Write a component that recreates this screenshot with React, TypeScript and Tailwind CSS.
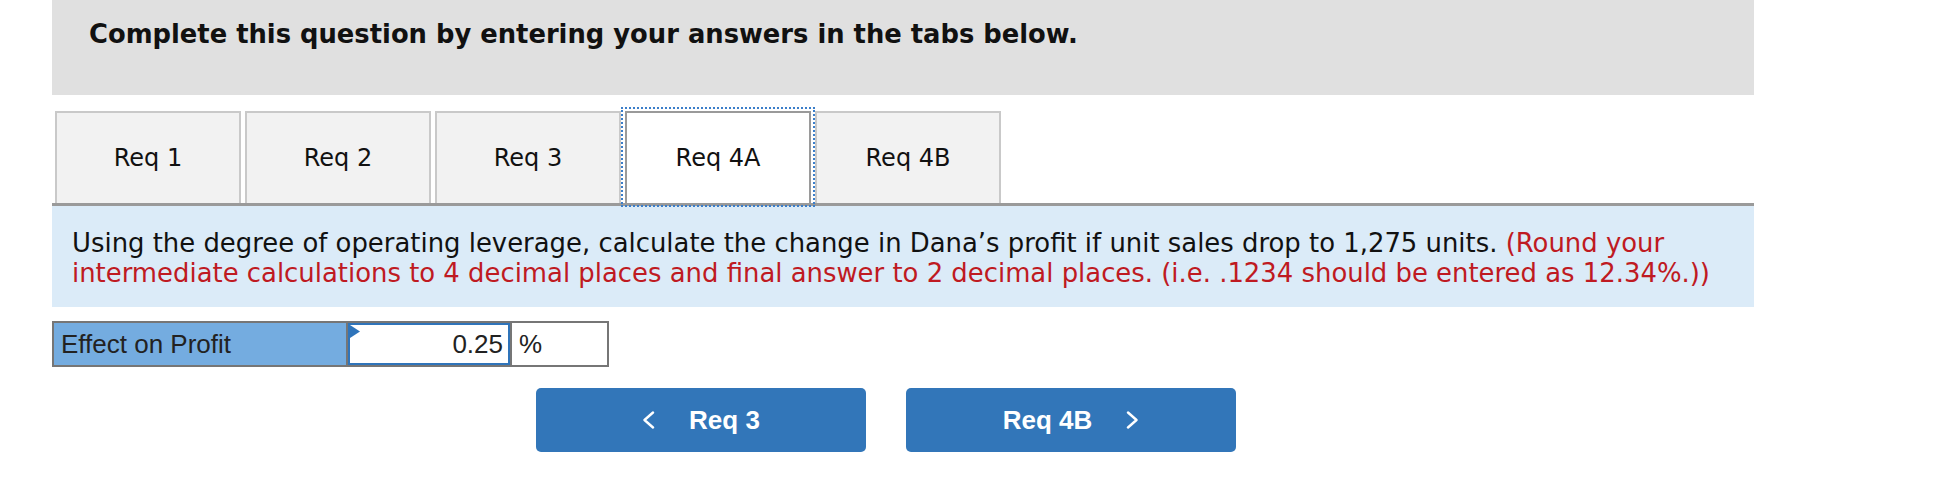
import React from "react";

const tabs = ["Req 1", "Req 2", "Req 3", "Req 4A", "Req 4B"];

function ChevronLeft() {
  return (
    <svg width="13" height="18" viewBox="0 0 13 18" fill="none">
      <polyline points="11,1.5 2.5,9 11,16.5" stroke="white" strokeWidth="2.4" strokeLinecap="round" strokeLinejoin="round" />
    </svg>
  );
}

function ChevronRight() {
  return (
    <svg width="13" height="18" viewBox="0 0 13 18" fill="none">
      <polyline points="2,1.5 10.5,9 2,16.5" stroke="white" strokeWidth="2.4" strokeLinecap="round" strokeLinejoin="round" />
    </svg>
  );
}

export default function App() {
  return (
    <div className="w-[1950px] h-[488px] bg-white overflow-hidden">
      <div className="ml-[52px] w-[1702px]">
        {/* Header */}
        <div className="h-[95px] bg-[#e0e0e0] pl-[37px] pt-[19px]">
          <div className="font-['DejaVu_Sans',sans-serif] font-bold text-[25.8px] leading-[30px] text-[#111]">
            Complete this question by entering your answers in the tabs below.
          </div>
        </div>

        {/* Tabs */}
        <div className="mt-[16px] flex gap-[4px] pl-[3px] h-[92px]">
          {tabs.map((t) => {
            const active = t === "Req 4A";
            return (
              <div
                key={t}
                className={
                  active
                    ? "w-[186px] h-[92px] flex items-center justify-center bg-white border-2 border-b-0 border-[#9a9a9a] outline-2 outline-dotted outline-offset-2 outline-[#3b7ec9] font-['DejaVu_Sans',sans-serif] text-[24px] text-[#111]"
                    : "w-[186px] h-[92px] flex items-center justify-center bg-[#f2f2f2] border-2 border-b-0 border-[#c9c9c9] font-['DejaVu_Sans',sans-serif] text-[24px] text-[#111]"
                }
              >
                {t}
              </div>
            );
          })}
        </div>
        <div className="h-[3px] bg-[#9a9a9a]" />

        {/* Question panel */}
        <div className="bg-[#dbebf8] h-[101px] pl-[20px] pt-[22px]">
          <p className="font-['DejaVu_Sans',sans-serif] text-[25.9px] leading-[30px] text-[#111] whitespace-nowrap">
            Using the degree of operating leverage, calculate the change in Dana’s profit if unit sales drop to 1,275 units.{" "}
            <span className="text-[#bf1a22]">(Round your</span>
            <br />
            <span className="text-[#bf1a22]">
              intermediate calculations to 4 decimal places and final answer to 2 decimal places. (i.e. .1234 should be entered as 12.34%.))
            </span>
          </p>
        </div>

        {/* Answer row */}
        <div className="mt-[14px] w-[557px] h-[46px] border-2 border-[#767676] flex font-['Liberation_Sans',Arial,sans-serif] text-[26px] text-[#222]">
          <div className="w-[294px] bg-[#74ace0] border-r-2 border-[#767676] flex items-center pl-[7px]">
            Effect on Profit
          </div>
          <div className="relative w-[162px] border-2 border-[#2f74ba] bg-white flex items-center justify-end pr-[5px]">
            <svg className="absolute left-0 top-0" width="11" height="13" viewBox="0 0 11 13">
              <polygon points="0,0 10,6.5 0,13" fill="#2f74ba" />
            </svg>
            0.25
          </div>
          <div className="flex-1 border-l-2 border-[#767676] flex items-center pl-[7px]">%</div>
        </div>

        {/* Navigation buttons */}
        <div className="mt-[21px] ml-[484px] flex gap-[40px]">
          <button className="w-[330px] h-[64px] rounded-[5px] bg-[#3276b9] flex items-center justify-center gap-[34px] text-white font-['Liberation_Sans',Arial,sans-serif] font-bold text-[26px]">
            <ChevronLeft />
            <span>Req 3</span>
          </button>
          <button className="w-[330px] h-[64px] rounded-[5px] bg-[#3276b9] flex items-center justify-center gap-[34px] text-white font-['Liberation_Sans',Arial,sans-serif] font-bold text-[26px]">
            <span>Req 4B</span>
            <ChevronRight />
          </button>
        </div>
      </div>
    </div>
  );
}
